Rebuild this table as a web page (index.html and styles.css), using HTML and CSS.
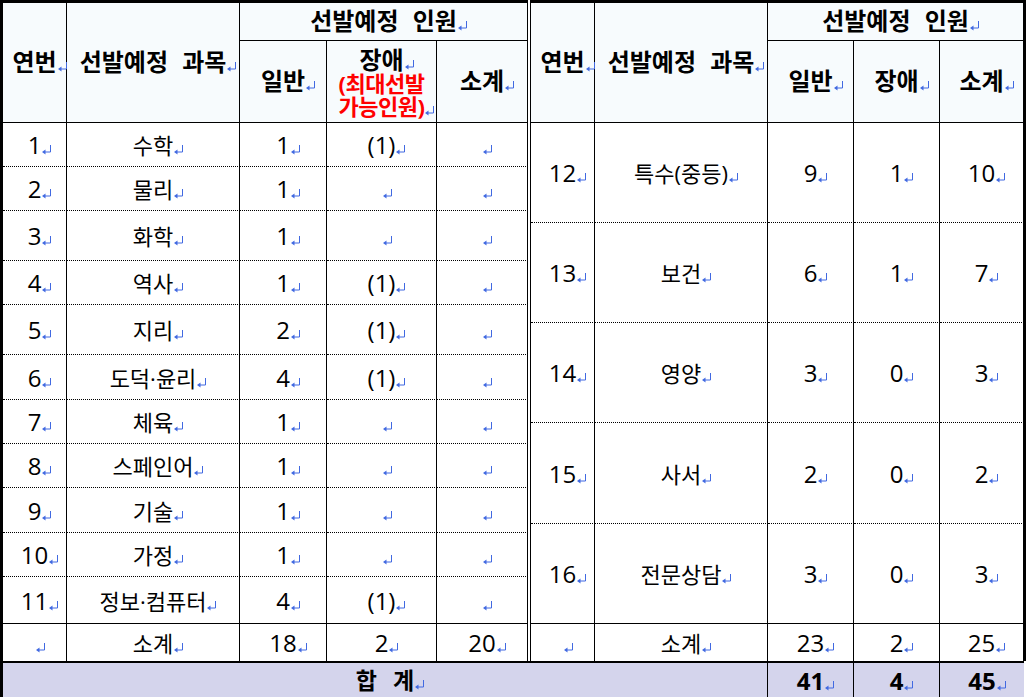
FILE: index.html
```html
<!DOCTYPE html>
<html lang="ko">
<head>
<meta charset="utf-8">
<title>선발예정 인원</title>
<link rel="stylesheet" href="styles.css">
</head>
<body>
<svg class="defs" aria-hidden="true"><symbol id="pm" viewBox="0 0 10 11"><path d="M8.5 1V8H2.5" fill="none" stroke="#4169e1" stroke-width="1"/><path d="M0 8L3.5 5.5V10.5Z" fill="#4169e1"/></symbol></svg>
<div class="sheet">
  <div class="halves">
    <div class="tbl tbl-left">
      <div class="c hd r2"><span class="t">연번<svg class="pm"><use href="#pm"/></svg></span></div>
      <div class="c hd r2"><span class="t">선발예정 과목<svg class="pm"><use href="#pm"/></svg></span></div>
      <div class="c hd c3"><span class="t">선발예정 인원<svg class="pm"><use href="#pm"/></svg></span></div>
      <div class="c hd"><span class="t">일반<svg class="pm"><use href="#pm"/></svg></span></div>
      <div class="c hd"><span class="stack"><span class="t top">장애<svg class="pm"><use href="#pm"/></svg></span><span class="red">(최대선발<br>가능인원)<svg class="pm"><use href="#pm"/></svg></span></span></div>
      <div class="c hd"><span class="t">소계<svg class="pm"><use href="#pm"/></svg></span></div>

      <div class="c n"><span class="t">1<svg class="pm"><use href="#pm"/></svg></span></div>
      <div class="c"><span class="t">수학<svg class="pm"><use href="#pm"/></svg></span></div>
      <div class="c n"><span class="t">1<svg class="pm"><use href="#pm"/></svg></span></div>
      <div class="c n"><span class="t">(1)<svg class="pm"><use href="#pm"/></svg></span></div>
      <div class="c n"><span class="t"><svg class="pm"><use href="#pm"/></svg></span></div>

      <div class="c n"><span class="t">2<svg class="pm"><use href="#pm"/></svg></span></div>
      <div class="c"><span class="t">물리<svg class="pm"><use href="#pm"/></svg></span></div>
      <div class="c n"><span class="t">1<svg class="pm"><use href="#pm"/></svg></span></div>
      <div class="c n"><span class="t"><svg class="pm"><use href="#pm"/></svg></span></div>
      <div class="c n"><span class="t"><svg class="pm"><use href="#pm"/></svg></span></div>

      <div class="c n"><span class="t">3<svg class="pm"><use href="#pm"/></svg></span></div>
      <div class="c"><span class="t">화학<svg class="pm"><use href="#pm"/></svg></span></div>
      <div class="c n"><span class="t">1<svg class="pm"><use href="#pm"/></svg></span></div>
      <div class="c n"><span class="t"><svg class="pm"><use href="#pm"/></svg></span></div>
      <div class="c n"><span class="t"><svg class="pm"><use href="#pm"/></svg></span></div>

      <div class="c n"><span class="t">4<svg class="pm"><use href="#pm"/></svg></span></div>
      <div class="c"><span class="t">역사<svg class="pm"><use href="#pm"/></svg></span></div>
      <div class="c n"><span class="t">1<svg class="pm"><use href="#pm"/></svg></span></div>
      <div class="c n"><span class="t">(1)<svg class="pm"><use href="#pm"/></svg></span></div>
      <div class="c n"><span class="t"><svg class="pm"><use href="#pm"/></svg></span></div>

      <div class="c n"><span class="t">5<svg class="pm"><use href="#pm"/></svg></span></div>
      <div class="c"><span class="t">지리<svg class="pm"><use href="#pm"/></svg></span></div>
      <div class="c n"><span class="t">2<svg class="pm"><use href="#pm"/></svg></span></div>
      <div class="c n"><span class="t">(1)<svg class="pm"><use href="#pm"/></svg></span></div>
      <div class="c n"><span class="t"><svg class="pm"><use href="#pm"/></svg></span></div>

      <div class="c n"><span class="t">6<svg class="pm"><use href="#pm"/></svg></span></div>
      <div class="c"><span class="t">도덕·윤리<svg class="pm"><use href="#pm"/></svg></span></div>
      <div class="c n"><span class="t">4<svg class="pm"><use href="#pm"/></svg></span></div>
      <div class="c n"><span class="t">(1)<svg class="pm"><use href="#pm"/></svg></span></div>
      <div class="c n"><span class="t"><svg class="pm"><use href="#pm"/></svg></span></div>

      <div class="c n"><span class="t">7<svg class="pm"><use href="#pm"/></svg></span></div>
      <div class="c"><span class="t">체육<svg class="pm"><use href="#pm"/></svg></span></div>
      <div class="c n"><span class="t">1<svg class="pm"><use href="#pm"/></svg></span></div>
      <div class="c n"><span class="t"><svg class="pm"><use href="#pm"/></svg></span></div>
      <div class="c n"><span class="t"><svg class="pm"><use href="#pm"/></svg></span></div>

      <div class="c n"><span class="t">8<svg class="pm"><use href="#pm"/></svg></span></div>
      <div class="c"><span class="t">스페인어<svg class="pm"><use href="#pm"/></svg></span></div>
      <div class="c n"><span class="t">1<svg class="pm"><use href="#pm"/></svg></span></div>
      <div class="c n"><span class="t"><svg class="pm"><use href="#pm"/></svg></span></div>
      <div class="c n"><span class="t"><svg class="pm"><use href="#pm"/></svg></span></div>

      <div class="c n"><span class="t">9<svg class="pm"><use href="#pm"/></svg></span></div>
      <div class="c"><span class="t">기술<svg class="pm"><use href="#pm"/></svg></span></div>
      <div class="c n"><span class="t">1<svg class="pm"><use href="#pm"/></svg></span></div>
      <div class="c n"><span class="t"><svg class="pm"><use href="#pm"/></svg></span></div>
      <div class="c n"><span class="t"><svg class="pm"><use href="#pm"/></svg></span></div>

      <div class="c n"><span class="t">10<svg class="pm"><use href="#pm"/></svg></span></div>
      <div class="c"><span class="t">가정<svg class="pm"><use href="#pm"/></svg></span></div>
      <div class="c n"><span class="t">1<svg class="pm"><use href="#pm"/></svg></span></div>
      <div class="c n"><span class="t"><svg class="pm"><use href="#pm"/></svg></span></div>
      <div class="c n"><span class="t"><svg class="pm"><use href="#pm"/></svg></span></div>

      <div class="c n end"><span class="t">11<svg class="pm"><use href="#pm"/></svg></span></div>
      <div class="c end"><span class="t">정보·컴퓨터<svg class="pm"><use href="#pm"/></svg></span></div>
      <div class="c n end"><span class="t">4<svg class="pm"><use href="#pm"/></svg></span></div>
      <div class="c n end"><span class="t">(1)<svg class="pm"><use href="#pm"/></svg></span></div>
      <div class="c n end"><span class="t"><svg class="pm"><use href="#pm"/></svg></span></div>

      <div class="c n sub"><span class="t"><svg class="pm"><use href="#pm"/></svg></span></div>
      <div class="c sub"><span class="t">소계<svg class="pm"><use href="#pm"/></svg></span></div>
      <div class="c n sub"><span class="t">18<svg class="pm"><use href="#pm"/></svg></span></div>
      <div class="c n sub"><span class="t">2<svg class="pm"><use href="#pm"/></svg></span></div>
      <div class="c n sub"><span class="t">20<svg class="pm"><use href="#pm"/></svg></span></div>
    </div>

    <div class="tbl tbl-right">
      <div class="c hd r2"><span class="t">연번<svg class="pm"><use href="#pm"/></svg></span></div>
      <div class="c hd r2"><span class="t">선발예정 과목<svg class="pm"><use href="#pm"/></svg></span></div>
      <div class="c hd c3"><span class="t">선발예정 인원<svg class="pm"><use href="#pm"/></svg></span></div>
      <div class="c hd"><span class="t">일반<svg class="pm"><use href="#pm"/></svg></span></div>
      <div class="c hd"><span class="t">장애<svg class="pm"><use href="#pm"/></svg></span></div>
      <div class="c hd"><span class="t">소계<svg class="pm"><use href="#pm"/></svg></span></div>

      <div class="c n"><span class="t">12<svg class="pm"><use href="#pm"/></svg></span></div>
      <div class="c"><span class="t">특수(중등)<svg class="pm"><use href="#pm"/></svg></span></div>
      <div class="c n"><span class="t">9<svg class="pm"><use href="#pm"/></svg></span></div>
      <div class="c n"><span class="t">1<svg class="pm"><use href="#pm"/></svg></span></div>
      <div class="c n"><span class="t">10<svg class="pm"><use href="#pm"/></svg></span></div>

      <div class="c n"><span class="t">13<svg class="pm"><use href="#pm"/></svg></span></div>
      <div class="c"><span class="t">보건<svg class="pm"><use href="#pm"/></svg></span></div>
      <div class="c n"><span class="t">6<svg class="pm"><use href="#pm"/></svg></span></div>
      <div class="c n"><span class="t">1<svg class="pm"><use href="#pm"/></svg></span></div>
      <div class="c n"><span class="t">7<svg class="pm"><use href="#pm"/></svg></span></div>

      <div class="c n"><span class="t">14<svg class="pm"><use href="#pm"/></svg></span></div>
      <div class="c"><span class="t">영양<svg class="pm"><use href="#pm"/></svg></span></div>
      <div class="c n"><span class="t">3<svg class="pm"><use href="#pm"/></svg></span></div>
      <div class="c n"><span class="t">0<svg class="pm"><use href="#pm"/></svg></span></div>
      <div class="c n"><span class="t">3<svg class="pm"><use href="#pm"/></svg></span></div>

      <div class="c n"><span class="t">15<svg class="pm"><use href="#pm"/></svg></span></div>
      <div class="c"><span class="t">사서<svg class="pm"><use href="#pm"/></svg></span></div>
      <div class="c n"><span class="t">2<svg class="pm"><use href="#pm"/></svg></span></div>
      <div class="c n"><span class="t">0<svg class="pm"><use href="#pm"/></svg></span></div>
      <div class="c n"><span class="t">2<svg class="pm"><use href="#pm"/></svg></span></div>

      <div class="c n end"><span class="t">16<svg class="pm"><use href="#pm"/></svg></span></div>
      <div class="c end"><span class="t">전문상담<svg class="pm"><use href="#pm"/></svg></span></div>
      <div class="c n end"><span class="t">3<svg class="pm"><use href="#pm"/></svg></span></div>
      <div class="c n end"><span class="t">0<svg class="pm"><use href="#pm"/></svg></span></div>
      <div class="c n end"><span class="t">3<svg class="pm"><use href="#pm"/></svg></span></div>

      <div class="c n sub"><span class="t"><svg class="pm"><use href="#pm"/></svg></span></div>
      <div class="c sub"><span class="t">소계<svg class="pm"><use href="#pm"/></svg></span></div>
      <div class="c n sub"><span class="t">23<svg class="pm"><use href="#pm"/></svg></span></div>
      <div class="c n sub"><span class="t">2<svg class="pm"><use href="#pm"/></svg></span></div>
      <div class="c n sub"><span class="t">25<svg class="pm"><use href="#pm"/></svg></span></div>
    </div>
  </div>

  <div class="tbl tbl-total">
    <div class="c tot"><span class="t">합 계<svg class="pm"><use href="#pm"/></svg></span></div>
    <div class="c tot n"><span class="t">41<svg class="pm"><use href="#pm"/></svg></span></div>
    <div class="c tot n"><span class="t">4<svg class="pm"><use href="#pm"/></svg></span></div>
    <div class="c tot n nr"><span class="t">45<svg class="pm"><use href="#pm"/></svg></span></div>
  </div>
</div>
</body>
</html>
```

FILE: styles.css
```css
html, body {
  margin: 0;
  padding: 0;
  background: #ffffff;
}

body {
  font-family: "Open Sans", "Noto Sans CJK KR", sans-serif;
  font-size: 22px;
  color: #000000;
}

.defs {
  width: 0;
  height: 0;
  display: block;
  overflow: hidden;
}

.sheet {
  width: 1028px;
}

.halves {
  display: flex;
  gap: 2px;
}

.tbl {
  display: grid;
}

.tbl-left {
  grid-template-columns: 64px 173px 87px 110px 91px;
  grid-template-rows: 38px 82px 44px 44px 50px 44px 50px 45px 44px 44px 45px 44px 47px 37px;
  border-left: 3px solid #000;
  border-top: 3px solid #000;
}

.tbl-right {
  grid-template-columns: 64px 173px 86px 86px 84px;
  grid-template-rows: 38px 82px 100px 100px 100px 101px 100px 37px;
  border-left: 1px solid #000;
  border-top: 3px solid #000;
  border-right: 2px solid #000;
}

.tbl-total {
  grid-template-columns: 765px 86px 86px 84px;
  grid-template-rows: 34px;
  width: 1021px;
  border-left: 3px solid #000;
  border-top: 2px solid #000;
  background: #d4d4ec;
}

.c {
  box-sizing: border-box;
  display: flex;
  align-items: center;
  justify-content: center;
  border-right: 1px solid #000;
  border-bottom: 1px dotted #000;
  line-height: 1.2;
  padding-top: 2px;
}

.n {
  font-size: 24px;
}

.hd {
  background: #f7fbfd;
  font-weight: 700;
  font-size: 24px;
  border-bottom-style: solid;
  word-spacing: 8px;
  padding-top: 0;
}

.r2 {
  grid-row: span 2;
}

.c3 {
  grid-column: span 3;
}

.end {
  border-bottom-style: solid;
}

.sub {
  border-bottom: none;
}

.tot {
  border-bottom: none;
  font-weight: 700;
  font-size: 23px;
  word-spacing: 10px;
}

.tot.n {
  font-size: 24px;
}

.nr {
  border-right: none;
}

.t {
  white-space: nowrap;
}

.stack {
  display: flex;
  flex-direction: column;
  align-items: center;
  padding-top: 2px;
}

.top {
  line-height: 25px;
}

.red {
  color: #ff0000;
  font-size: 22px;
  line-height: 23px;
  letter-spacing: -0.5px;
  text-align: center;
  white-space: nowrap;
}

.pm {
  width: 10px;
  height: 11px;
  margin-left: 1px;
  margin-right: -11px;
  vertical-align: -1px;
}
```
